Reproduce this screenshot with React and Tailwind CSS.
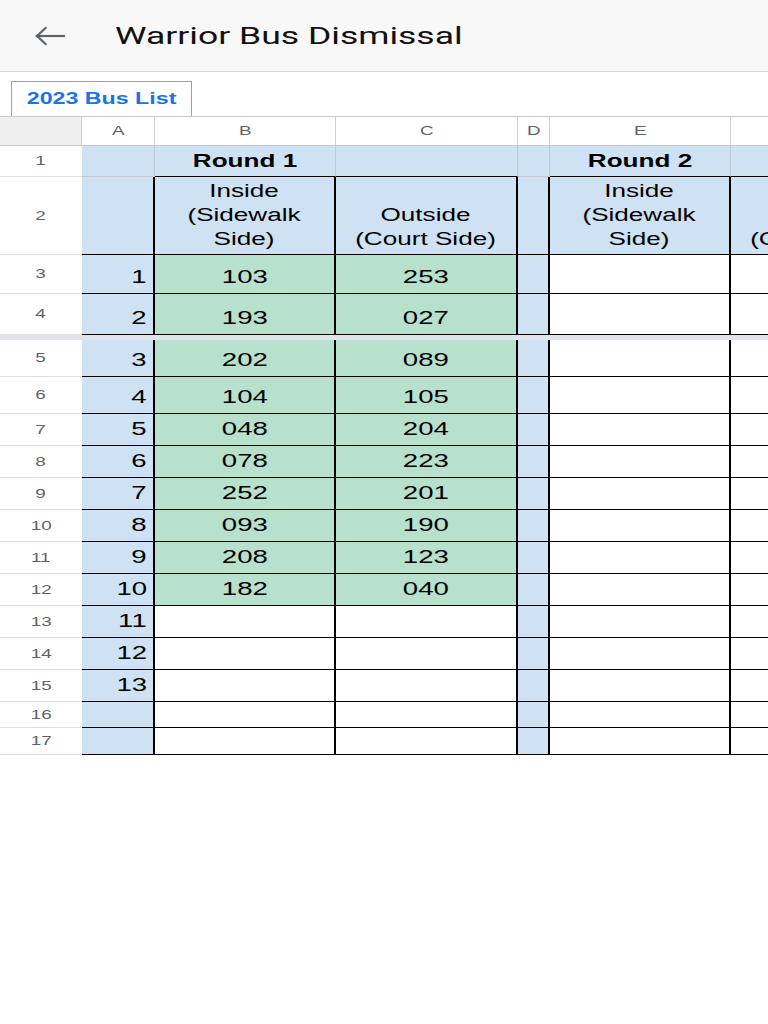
import React from "react";

const BLUE = "bg-[#cfe2f3]";

const dataRows = [
  { n: 3, a: "1", b: "103", c: "253", h: "h-[39px]" },
  { n: 4, a: "2", b: "193", c: "027", h: "h-[41px]" },
  { n: 5, a: "3", b: "202", c: "089", h: "h-[37px]" },
  { n: 6, a: "4", b: "104", c: "105", h: "h-[37px]" },
  { n: 7, a: "5", b: "048", c: "204", h: "h-[32px]" },
  { n: 8, a: "6", b: "078", c: "223", h: "h-[32px]" },
  { n: 9, a: "7", b: "252", c: "201", h: "h-[32px]" },
  { n: 10, a: "8", b: "093", c: "190", h: "h-[32px]" },
  { n: 11, a: "9", b: "208", c: "123", h: "h-[32px]" },
  { n: 12, a: "10", b: "182", c: "040", h: "h-[32px]" },
  { n: 13, a: "11", b: "", c: "", h: "h-[32px]" },
  { n: 14, a: "12", b: "", c: "", h: "h-[32px]" },
  { n: 15, a: "13", b: "", c: "", h: "h-[32px]" },
  { n: 16, a: "", b: "", c: "", h: "h-[26px]" },
  { n: 17, a: "", b: "", c: "", h: "h-[27px]" },
];

function Stretch({ children, className = "" }) {
  return <span className={"inline-block scale-x-[1.45] whitespace-nowrap " + className}>{children}</span>;
}

function RowHead({ n }) {
  return (
    <div className="w-[82px] shrink-0 flex items-center justify-center border-b border-[#e2e2e2] bg-white text-[13px] text-[#5f6368]">
      <Stretch>{n}</Stretch>
    </div>
  );
}

function HeaderText({ lines }) {
  return (
    <Stretch className="text-center leading-6 text-[18px] text-black">
      {lines.map((l, i) => (
        <React.Fragment key={i}>
          {i > 0 && <br />}
          {l}
        </React.Fragment>
      ))}
    </Stretch>
  );
}

function DataRow({ r }) {
  const green = r.b !== "";
  const fill = green ? "bg-[#b7e1cd]" : "bg-white";
  return (
    <div className={"flex " + r.h}>
      <RowHead n={r.n} />
      <div className="w-[73px] shrink-0 bg-[#cfe2f3] border-b border-r-2 border-black flex items-end justify-end pr-[6px] pb-1 text-[19px] leading-6 text-black">
        {r.a && <Stretch className="origin-right">{r.a}</Stretch>}
      </div>
      <div className={"w-[181px] shrink-0 border-b border-r-2 border-black flex items-end justify-center pb-1 text-[19px] leading-6 text-black " + fill}>
        {r.b && <Stretch>{r.b}</Stretch>}
      </div>
      <div className={"w-[182px] shrink-0 border-b border-r-2 border-black flex items-end justify-center pb-1 text-[19px] leading-6 text-black " + fill}>
        {r.c && <Stretch>{r.c}</Stretch>}
      </div>
      <div className="w-[32px] shrink-0 bg-[#cfe2f3] border-b border-r-2 border-black" />
      <div className="w-[181px] shrink-0 bg-white border-b border-r-2 border-black" />
      <div className="w-[182px] shrink-0 bg-white border-b border-r-2 border-black" />
    </div>
  );
}

export default function App() {
  return (
    <div className="w-[768px] h-[1024px] overflow-hidden bg-white font-['Liberation_Sans',Arial,sans-serif]">
      {/* App bar */}
      <div className="h-[72px] bg-[#f8f8f8] border-b border-[#d4d4d4] shadow-[0_1px_2px_rgba(0,0,0,0.08)] flex items-center">
        <div className="w-[115px] shrink-0 pl-[35px] flex items-center">
          <svg width="30" height="20" viewBox="0 0 30 20" fill="none" stroke="#5f6368" strokeWidth="2.2" strokeLinecap="square">
            <path d="M2 10H29" />
            <path d="M2 10L10.5 2" />
            <path d="M2 10L10.5 18" />
          </svg>
        </div>
        <span className="inline-block scale-x-[1.45] origin-left whitespace-nowrap font-['Roboto',sans-serif] text-[24.5px] text-[#111] mt-[1px]">
          Warrior Bus Dismissal
        </span>
      </div>

      {/* Tab strip */}
      <div className="h-[44px] bg-white flex items-end pl-[11px]">
        <div className="w-[181px] h-[35px] border border-b-0 border-[#a0a0a0] bg-white flex items-center justify-center">
          <Stretch className="text-[16px] font-bold text-[#1a73e8]">2023 Bus List</Stretch>
        </div>
      </div>

      {/* Column header row */}
      <div className="flex h-[30px] border-t border-b border-[#c8c8c8] text-[13px] text-[#5f6368]">
        <div className="w-[82px] shrink-0 bg-[#efefef] border-r border-[#d0d0d0]" />
        <div className="w-[73px] shrink-0 border-r border-[#d0d0d0] flex items-center justify-center"><Stretch>A</Stretch></div>
        <div className="w-[181px] shrink-0 border-r border-[#d0d0d0] flex items-center justify-center"><Stretch>B</Stretch></div>
        <div className="w-[182px] shrink-0 border-r border-[#d0d0d0] flex items-center justify-center"><Stretch>C</Stretch></div>
        <div className="w-[32px] shrink-0 border-r border-[#d0d0d0] flex items-center justify-center"><Stretch>D</Stretch></div>
        <div className="w-[181px] shrink-0 border-r border-[#d0d0d0] flex items-center justify-center"><Stretch>E</Stretch></div>
        <div className="w-[182px] shrink-0 border-r border-[#d0d0d0]" />
      </div>

      {/* Row 1 */}
      <div className="flex h-[31px]">
        <RowHead n={1} />
        <div className="w-[73px] shrink-0 bg-[#cfe2f3] border-b border-r border-[#bfcad6]" />
        <div className="w-[181px] shrink-0 bg-[#cfe2f3] border-b border-b-black border-r border-r-[#bfcad6] flex items-end justify-center pb-[3px]">
          <Stretch className="text-[18px] font-bold leading-6 text-black">Round 1</Stretch>
        </div>
        <div className="w-[182px] shrink-0 bg-[#cfe2f3] border-b border-b-black border-r border-r-[#bfcad6]" />
        <div className="w-[32px] shrink-0 bg-[#cfe2f3] border-b border-r border-[#bfcad6]" />
        <div className="w-[181px] shrink-0 bg-[#cfe2f3] border-b border-b-black border-r border-r-[#bfcad6] flex items-end justify-center pb-[3px]">
          <Stretch className="text-[18px] font-bold leading-6 text-black">Round 2</Stretch>
        </div>
        <div className="w-[182px] shrink-0 bg-[#cfe2f3] border-b border-b-black border-r border-r-[#bfcad6]" />
      </div>

      {/* Row 2 */}
      <div className="flex h-[78px]">
        <RowHead n={2} />
        <div className={"w-[73px] shrink-0 border-b border-r-2 border-black " + BLUE} />
        <div className={"w-[181px] shrink-0 border-b border-r-2 border-black flex items-end justify-center pb-[3px] " + BLUE}>
          <HeaderText lines={["Inside", "(Sidewalk", "Side)"]} />
        </div>
        <div className={"w-[182px] shrink-0 border-b border-r-2 border-black flex items-end justify-center pb-[3px] " + BLUE}>
          <HeaderText lines={["Outside", "(Court Side)"]} />
        </div>
        <div className={"w-[32px] shrink-0 border-b border-r-2 border-black " + BLUE} />
        <div className={"w-[181px] shrink-0 border-b border-r-2 border-black flex items-end justify-center pb-[3px] " + BLUE}>
          <HeaderText lines={["Inside", "(Sidewalk", "Side)"]} />
        </div>
        <div className={"w-[182px] shrink-0 border-b border-r-2 border-black flex items-end justify-center pb-[3px] " + BLUE}>
          <HeaderText lines={["Outside", "(Court Side)"]} />
        </div>
      </div>

      {dataRows.slice(0, 2).map((r) => (
        <DataRow key={r.n} r={r} />
      ))}

      {/* Frozen divider */}
      <div className="h-[5px] bg-[#dfe3ea]" />

      {dataRows.slice(2).map((r) => (
        <DataRow key={r.n} r={r} />
      ))}
    </div>
  );
}
